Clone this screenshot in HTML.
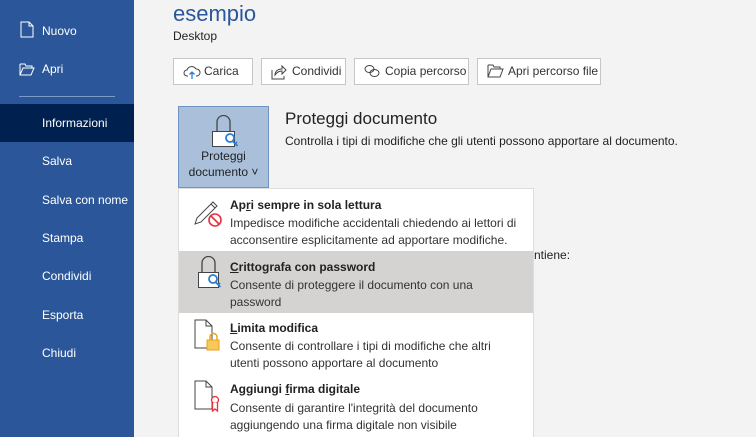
<!DOCTYPE html>
<html><head><meta charset="utf-8"><style>
*{margin:0;padding:0;box-sizing:border-box}
html,body{width:756px;height:437px;overflow:hidden}
body{background:#f3f3f3;font-family:"Liberation Sans",sans-serif;position:relative;color:#222}
.side{position:absolute;left:0;top:0;width:134px;height:437px;background:#2b579a;color:#fff;font-size:12px}
.side .it{position:absolute;left:42px;white-space:nowrap}
.sep{position:absolute;left:19px;width:96px;top:96px;height:1px;background:#7d9ac7}
.sel{position:absolute;left:0;top:104px;width:134px;height:38px;background:#002050}
.ab{position:absolute;font-size:12px;white-space:nowrap}
.btn{position:absolute;top:58px;height:27px;border:1px solid #c6c6c6;background:#fff;font-size:12px;line-height:25px;padding-left:30px;color:#333;white-space:nowrap}
.btn svg{position:absolute;left:9px;top:5px}
.menu{position:absolute;left:178px;top:188px;width:356px;height:260px;background:#fff;border:1px solid #ddd}
.row{position:absolute;left:0;width:354px}
.t{position:absolute;left:51px;font-weight:bold;font-size:12px;white-space:nowrap}
.d{position:absolute;left:51px;font-size:12px;line-height:17px;color:#333;white-space:nowrap}
.ic{position:absolute;left:14px}
</style></head><body>
<div class="side">
<svg style="position:absolute;left:20px;top:21px" width="14" height="17" viewBox="0 0 14 17"><path d="M1 1h8l4 4v11H1z M9 1v4h4" fill="none" stroke="#fff" stroke-width="1"/></svg>
<div class="it" style="top:24px">Nuovo</div>
<svg style="position:absolute;left:19px;top:63px" width="16" height="13" viewBox="0 0 16 13"><path d="M1 1h5l1 2h6v2 M1 1v11h11l3-7H4L1 12" fill="none" stroke="#fff"/></svg>
<div class="it" style="top:62px">Apri</div>
<div class="sep"></div>
<div class="sel"></div>
<div class="it" style="top:116px">Informazioni</div>
<div class="it" style="top:154px">Salva</div>
<div class="it" style="top:193px">Salva con nome</div>
<div class="it" style="top:231px">Stampa</div>
<div class="it" style="top:269px">Condividi</div>
<div class="it" style="top:308px">Esporta</div>
<div class="it" style="top:346px">Chiudi</div>
</div>
<div class="ab" style="left:173px;top:1px;font-size:22px;color:#2b579a">esempio</div>
<div class="ab" style="left:173px;top:29px;font-size:12px">Desktop</div>
<div class="btn" style="left:173px;width:80px"><svg width="18" height="16" viewBox="0 0 18 16"><path d="M5 12H4a3 3 0 0 1 0-6 5 5 0 0 1 9-1 3.5 3.5 0 0 1 1 7h-1" fill="none" stroke="#444"/><path d="M9 15V8M6.5 10.5L9 8l2.5 2.5" fill="none" stroke="#2b7cd3" stroke-width="1.3"/></svg>Carica</div>
<div class="btn" style="left:261px;width:85px"><svg width="16" height="16" viewBox="0 0 16 16"><path d="M1 6v9h12v-3 M4 11c0-4 3-6 7-6V2l4 4-4 4V7c-3 0-5 1-7 4z" fill="none" stroke="#444"/></svg>Condividi</div>
<div class="btn" style="left:354px;width:115px"><svg width="16" height="14" viewBox="0 0 16 14"><ellipse cx="5.5" cy="5" rx="4.5" ry="3.5" fill="none" stroke="#444"/><ellipse cx="10.5" cy="9" rx="4.5" ry="3.5" fill="none" stroke="#444"/></svg>Copia percorso</div>
<div class="btn" style="left:477px;width:124px"><svg width="17" height="14" viewBox="0 0 17 14"><path d="M1 1h5l1 2h6v2 M1 1v12h12l3-8H4L1 13" fill="none" stroke="#444"/></svg>Apri percorso file</div>
<div style="position:absolute;left:178px;top:106px;width:91px;height:82px;background:#aac0da;border:1px solid #6f93c2"></div>
<svg style="position:absolute;left:211px;top:115px" width="30" height="34" viewBox="0 0 30 34"><path d="M6 16V7a6.5 6.5 0 0 1 13 0v9" fill="none" stroke="#444" stroke-width="1.3"/><rect x="1.5" y="16.5" width="22" height="15" fill="#fff" stroke="#444"/><circle cx="19" cy="23" r="4" fill="#fff" stroke="#2b7cd3" stroke-width="1.8"/><path d="M21.5 26l5 5M24 29l2-2" stroke="#2b7cd3" stroke-width="1.8"/></svg>
<div class="ab" style="left:178px;top:148px;width:91px;text-align:center;line-height:16px;font-size:12px">Proteggi<br>documento ˅</div>
<div class="ab" style="left:285px;top:109px;font-size:17px">Proteggi documento</div>
<div class="ab" style="left:285px;top:134px">Controlla i tipi di modifiche che gli utenti possono apportare al documento.</div>
<div class="ab" style="left:534px;top:248px">ntiene:</div>
<div class="menu">
<div class="row" style="top:62px;height:62px;background:#d4d3d2"></div>
<svg class="ic" style="top:9px" width="30" height="30" viewBox="0 0 30 30"><path d="M2 26l2-6L20 4l4 4L8 24z M18 6l4 4" fill="none" stroke="#444"/><circle cx="22" cy="22" r="6" fill="#fff" stroke="#e8303a" stroke-width="1.6"/><path d="M18 18l8 8" stroke="#e8303a" stroke-width="1.6"/></svg>
<div class="t" style="top:9px">Ap<u>r</u>i sempre in sola lettura</div>
<div class="d" style="top:26px">Impedisce modifiche accidentali chiedendo ai lettori di<br>acconsentire esplicitamente ad apportare modifiche.</div>
<svg class="ic" style="top:67px" width="30" height="34" viewBox="0 0 30 34"><path d="M9 16V7a6.5 6.5 0 0 1 13 0v9" fill="none" stroke="#444" stroke-width="1.3"/><rect x="5.5" y="16.5" width="20" height="15" fill="#fff" stroke="#444"/><circle cx="20" cy="23" r="4" fill="#fff" stroke="#2b7cd3" stroke-width="1.8"/><path d="M22.5 26l5 5M25 29l2-2" stroke="#2b7cd3" stroke-width="1.8"/></svg>
<div class="t" style="top:71px"><u>C</u>rittografa con password</div>
<div class="d" style="top:88px">Consente di proteggere il documento con una<br>password</div>
<svg class="ic" style="top:130px" width="30" height="34" viewBox="0 0 30 34"><path d="M2 1h11l6 6v22H2z M13 1v6h6" fill="#fff" stroke="#444"/><path d="M17 21v-3a3.5 3.5 0 0 1 7 0v3" fill="none" stroke="#e8a317" stroke-width="1.4"/><rect x="14" y="21" width="12" height="10" fill="#f8c95a" stroke="#e8a317"/></svg>
<div class="t" style="top:132px"><u>L</u>imita modifica</div>
<div class="d" style="top:149px">Consente di controllare i tipi di modifiche che altri<br>utenti possono apportare al documento</div>
<svg class="ic" style="top:191px" width="30" height="34" viewBox="0 0 30 34"><path d="M2 1h11l6 6v22H2z M13 1v6h6" fill="#fff" stroke="#444"/><circle cx="22" cy="20" r="3.5" fill="#fff" stroke="#e8303a" stroke-width="1.3"/><path d="M19.5 23v8l2.5-2 2.5 2v-8" fill="#fff" stroke="#e8303a" stroke-width="1.3"/></svg>
<div class="t" style="top:193px">Aggiungi <u>f</u>irma digitale</div>
<div class="d" style="top:211px">Consente di garantire l'integrità del documento<br>aggiungendo una firma digitale non visibile</div>
</div>
</body></html>
